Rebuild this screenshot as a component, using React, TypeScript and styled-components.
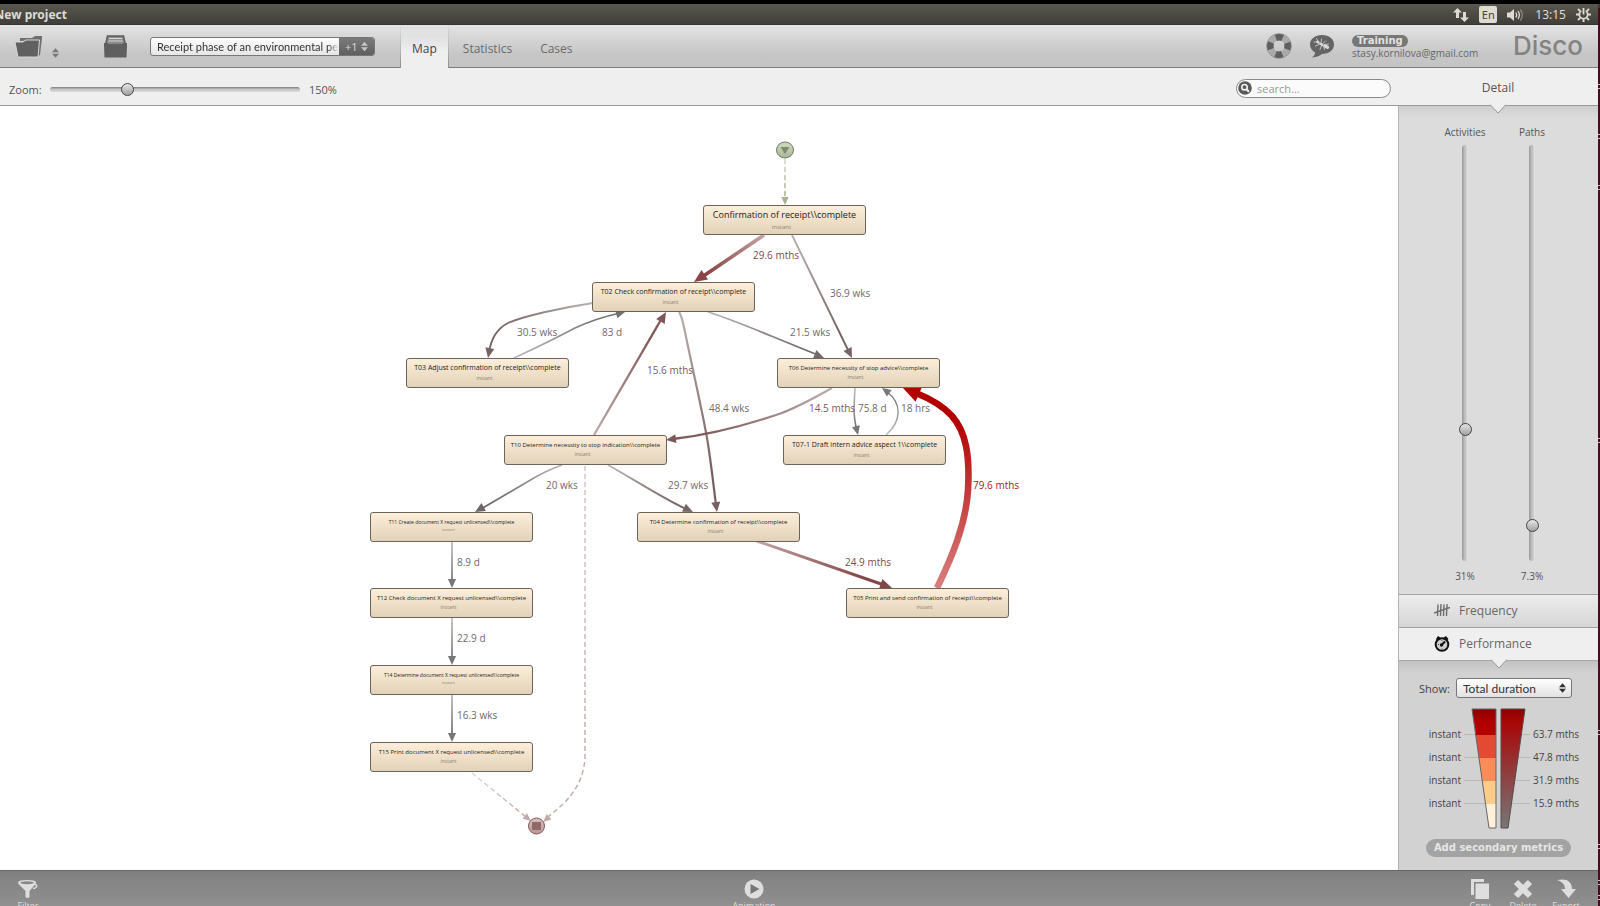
import React from "react";
import styled, { createGlobalStyle, css } from "styled-components";

const UI_FONT = '"Open Sans", "Noto Sans", sans-serif';

const GlobalStyle = createGlobalStyle`
  *, *::before, *::after { box-sizing: border-box; }
  html, body { margin: 0; height: 100%; }
  body { font-family: ${UI_FONT}; font-size: 11px; color: #444; background: #000; }
  button, input, select { font-family: inherit; color: inherit; margin: 0; }
  svg { display: block; }
`;

/* ---------- window ---------- */

const Desktop = styled.div`
  height: 100vh;
  overflow: hidden;
  display: flex;
  padding-top: 4px;
  background: #000;
`;

const AppWindow = styled.div`
  flex: 1;
  min-width: 0;
  display: flex;
  flex-direction: column;
`;

const DesktopEdge = styled.div`
  position: relative;
  flex: none;
  width: 2px;
  background: #4a0a22;
  border-top: 4px solid #3c3b37;
`;

const EdgeMark = styled.span<{ $top: number }>`
  position: absolute;
  left: 0;
  top: ${(p) => p.$top}px;
  width: 2px;
  height: 5px;
  border: solid #c9bcc2;
  border-width: 1px 0;
`;

const TitleBar = styled.header`
  flex: none;
  height: 21px;
  display: flex;
  align-items: center;
  justify-content: space-between;
  background: linear-gradient(#59574f, #3f3e39);
  border-bottom: 1px solid #35342f;
  color: #dfdbd2;
`;

const WindowTitle = styled.h1`
  margin: 0;
  padding-top: 1px;
  width: 67px;
  display: flex;
  justify-content: flex-end;
  overflow: hidden;
  white-space: nowrap;
  font: 700 12px/20px "Noto Sans", sans-serif;
`;

const Tray = styled.div`
  display: flex;
  align-items: center;
  gap: 10px;
  padding: 1px 7px 0 0;
`;

const KeyboardLayout = styled.span`
  width: 18px;
  height: 17px;
  border-radius: 2px;
  background: #dfdbd2;
  color: #45433d;
  font: 400 11px/17px "Noto Sans", sans-serif;
  text-align: center;
`;

const Clock = styled.time`
  font: 400 12px/20px "Noto Sans", sans-serif;
`;

/* ---------- toolbar ---------- */

const Toolbar = styled.div`
  flex: none;
  height: 43px;
  display: flex;
  background: linear-gradient(#e3e3e3, #c6c6c6 70%, #c4c4c4);
  border-bottom: 1px solid #7d7d7d;
`;

const FileTools = styled.div`
  flex: none;
  width: 150px;
  display: flex;
  align-items: center;
  justify-content: space-between;
  padding: 1px 23px 0 15px;
`;

const HelpTools = styled.div`
  flex: none;
  width: 86px;
  display: flex;
  align-items: center;
  gap: 18px;
`;

const IconButton = styled.button`
  flex: none;
  padding: 0;
  border: 0;
  background: none;
  display: flex;
  align-items: flex-end;
  gap: 9px;
`;

const Picker = styled.div`
  flex: none;
  align-self: center;
  width: 225px;
  height: 19px;
  margin-top: 1px;
  display: flex;
  border: 1px solid #777;
  border-radius: 3px;
  overflow: hidden;
  background: linear-gradient(#fdfdfd, #e6e6e6);
`;

const PickerSelect = styled.select`
  appearance: none;
  flex: 1;
  min-width: 0;
  padding: 0 0 0 6px;
  border: 0;
  background: none;
  font-size: 11px;
  font-family: Lato, sans-serif;
  line-height: 17px;
  color: #333;
  mask-image: linear-gradient(90deg, #000 94%, transparent);
`;

const PickerMore = styled.button`
  flex: none;
  width: 35px;
  padding: 0 0 0 6px;
  border: 0;
  display: flex;
  align-items: center;
  gap: 3px;
  background: linear-gradient(#7b7b7b, #5f5f5f);
  color: #dadada;
  font-size: 11px;
  line-height: 17px;
`;

const Tabs = styled.nav`
  flex: 1;
  display: flex;
  margin-left: 25px;
`;

const Tab = styled.a<{ $active?: boolean }>`
  padding: 0 14px;
  font-size: 12px;
  line-height: 48px;
  height: 42px;
  text-decoration: none;
  color: #6b6b6b;
  ${(p) =>
    p.$active &&
    css`
      height: 43px;
      padding: 0 11px;
      color: #444;
      border: solid transparent;
      border-width: 0 1px;
      border-image: linear-gradient(rgba(140, 140, 140, 0), #8a8a8a) 1;
      background: linear-gradient(rgba(239, 239, 239, 0), #efefef 60%);
    `}
`;

const Account = styled.div`
  width: 161px;
  display: flex;
  flex-direction: column;
  align-items: flex-start;
  padding-top: 10px;
`;

const Badge = styled.span`
  height: 12px;
  padding: 0 5px;
  border-radius: 6px;
  background: #777;
  color: #e2e2e2;
  font: 700 10px/12px "DejaVu Sans", sans-serif;
`;

const Email = styled.span`
  font-size: 10px;
  line-height: 12px;
  color: #666;
`;

const Brand = styled.div`
  width: 85px;
  font: 500 26px/42px Inter, sans-serif;
  color: #838383;
`;

/* ---------- sub bar ---------- */

const SubBar = styled.div`
  flex: none;
  height: 38px;
  display: flex;
  align-items: center;
  padding-top: 3px;
  background: #efefef;
  border-bottom: 1px solid #999;
`;

const ZoomControl = styled.div`
  flex: 1;
  display: flex;
  align-items: center;
  padding: 2px 0 0 9px;
`;

const ZoomLabel = styled.label`
  width: 41px;
  color: #555;
`;

const thumb = css`
  appearance: none;
  width: 13px;
  height: 13px;
  border: 1px solid #444;
  border-radius: 50%;
  background: linear-gradient(#e6e6e6, #a0a0a0);
`;

const HorizontalRange = styled.input`
  appearance: none;
  width: 250px;
  height: 13px;
  background: none;
  &::-webkit-slider-runnable-track {
    height: 5px;
    border-radius: 3px;
    background: linear-gradient(#7c7c7c, #c4c4c4 45%, #dcdcdc);
  }
  &::-webkit-slider-thumb {
    ${thumb}
    margin-top: -4px;
  }
`;

const VerticalRange = styled.input`
  appearance: none;
  writing-mode: vertical-lr;
  direction: rtl;
  flex: 1;
  min-height: 0;
  width: 13px;
  background: none;
  &::-webkit-slider-runnable-track {
    width: 6px;
    border-radius: 3px;
    background: linear-gradient(90deg, #979797, #bcbcbc 40%, #c6c6c6 65%, #e8e8e8);
  }
  &::-webkit-slider-thumb {
    ${thumb}
    margin-left: -3px;
  }
`;

const ZoomValue = styled.output`
  margin-left: 9px;
  color: #555;
`;

const SearchBox = styled.label`
  width: 155px;
  height: 19px;
  margin-right: 7px;
  display: flex;
  align-items: center;
  gap: 5px;
  padding: 0 1px;
  border: 1px solid #8a8a8a;
  border-radius: 10px;
  background: #fbfbfb;
`;

const SearchInput = styled.input`
  min-width: 0;
  flex: 1;
  padding: 0;
  border: 0;
  outline: 0;
  background: none;
  font-size: 11px;
  line-height: 15px;
  &::placeholder { color: #999; opacity: 1; }
`;

const DetailHeading = styled.h2`
  position: relative;
  margin: 0;
  width: 200px;
  font-size: 12px;
  font-weight: 400;
  line-height: 34px;
  text-align: center;
  color: #555;
`;

const NotchBox = styled.span`
  position: absolute;
  left: 50%;
  top: 100%;
  margin-left: -8px;
  margin-top: -1px;
  z-index: 1;
`;

/* ---------- main area ---------- */

const Body = styled.main`
  flex: 1;
  min-height: 0;
  display: flex;
`;

const Canvas = styled.section`
  flex: 1;
  min-width: 0;
  display: flex;
  justify-content: center;
  padding: 34px 20px 0 0;
  background: #fff;
`;

const Graph = styled.div`
  position: relative;
  flex: none;
  width: 640px;
  height: 700px;
`;

const EdgeLayer = styled.svg`
  position: absolute;
  inset: 0;
  overflow: visible;
`;

const ActivityBox = styled.div<{ $x: number; $y: number }>`
  position: absolute;
  left: ${(p) => p.$x}px;
  top: ${(p) => p.$y}px;
  width: 163px;
  height: 30px;
  border: 1px solid #6a645c;
  border-radius: 3px;
  background: linear-gradient(#fdeeda, #e2d2b8);
  text-align: center;
  white-space: nowrap;
`;

const ActivityName = styled.div<{ $size: number }>`
  height: ${(p) => p.$size + 8}px;
  font-size: ${(p) => p.$size}px;
  line-height: ${(p) => (p.$size < 7 ? 19 : 17)}px;
  color: #222;
`;

const ActivityMetric = styled.div<{ $size: number }>`
  font-size: ${(p) => p.$size}px;
  line-height: 8px;
  padding-right: 6px;
  color: #8b8272;
`;

const EdgeLabel = styled.span<{ $x: number; $y: number; $color: string }>`
  position: absolute;
  left: ${(p) => p.$x}px;
  top: ${(p) => p.$y - 7}px;
  font-size: 10px;
  line-height: 14px;
  white-space: nowrap;
  color: ${(p) => p.$color};
`;

/* ---------- sidebar ---------- */

const Sidebar = styled.aside`
  flex: none;
  width: 200px;
  display: flex;
  flex-direction: column;
  border-left: 1px solid #b4b4b4;
  background: #d2d2d2;
`;

const SliderPanel = styled.div`
  flex: 1;
  min-height: 0;
  display: flex;
  justify-content: center;
  padding: 19px 0 10px;
  background: linear-gradient(#cdcdcd, #dcdcdc 12px);
`;

const SliderColumn = styled.div`
  width: 67px;
  display: flex;
  flex-direction: column;
  align-items: center;
  line-height: 15px;
  color: #555;
`;

const SliderLabel = styled.label`
  font-size: 10px;
  margin-bottom: 5px;
`;

const SliderValue = styled.output`
  font-size: 10px;
  margin-top: 8px;
`;

const ModeButton = styled.button<{ $active?: boolean }>`
  position: relative;
  flex: none;
  height: 33px;
  padding: 0 0 2px 35px;
  display: flex;
  align-items: center;
  gap: 9px;
  border: 0;
  border-top: 1px solid #a2a2a2;
  background: ${(p) => (p.$active ? "#efefef" : "linear-gradient(#ececec, #d6d6d6)")};
  font-size: 12px;
  color: #666;
  text-align: left;
`;

const MetricPanel = styled.div`
  flex: none;
  display: flex;
  flex-direction: column;
  height: 210px;
  padding-top: 17px;
  border-top: 1px solid #a8a8a8;
  background: linear-gradient(#c2c2c2, #d2d2d2 12px);
`;

const ShowRow = styled.div`
  display: flex;
  align-items: center;
  padding-left: 20px;
  margin-bottom: 10px;
`;

const ShowLabel = styled.label`
  width: 37px;
  font-size: 11px;
  color: #444;
`;

const SelectShell = styled.span`
  position: relative;
  display: block;
`;

const MetricSelect = styled.select`
  appearance: none;
  width: 116px;
  height: 20px;
  padding: 0 6px;
  border: 1px solid #777;
  border-radius: 3px;
  background: linear-gradient(#fff, #e2e2e2);
  font-family: Lato, sans-serif;
  font-size: 12px;
  color: #333;
`;

const SelectArrows = styled.span`
  position: absolute;
  right: 6px;
  top: 5px;
  pointer-events: none;
`;

const Legend = styled.div`
  display: grid;
  grid-template-columns: 1fr 66px 1fr;
  gap: 3px;
  padding-right: 3px;
`;

const LegendLabels = styled.ul<{ $align: "left" | "right" }>`
  margin: 0;
  padding: 15px 0 0;
  list-style: none;
  text-align: ${(p) => p.$align};
  font-size: 10px;
  line-height: 23px;
  color: #444;
  white-space: nowrap;
`;

const AddMetricButton = styled.button`
  align-self: center;
  width: 145px;
  height: 18px;
  margin: 10px 0 0;
  padding: 0;
  border: 0;
  border-radius: 9px;
  background: #a3a3a3;
  color: #e6e6e6;
  font: 700 10px/18px "DejaVu Sans", sans-serif;
`;

/* ---------- bottom bar ---------- */

const BottomBar = styled.footer`
  flex: none;
  height: 36px;
  overflow: hidden;
  display: flex;
  justify-content: space-between;
  padding: 0 11px 0 7px;
  border-top: 1px solid #666;
  background: linear-gradient(#808080, #909090);
`;

const BottomGroup = styled.div`
  display: flex;
  gap: 1px;
`;

const BottomButton = styled.button`
  width: 42px;
  height: 42px;
  flex: none;
  display: flex;
  flex-direction: column;
  align-items: center;
  gap: 1px;
  padding: 8px 0 0;
  border: 0;
  background: none;
  color: #dedede;
  font-size: 9px;
  line-height: 11px;
`;

/* ---------- icons ---------- */

const UpDown = ({ color, w = 8, h = 11 }: { color: string; w?: number; h?: number }) => (
  <svg width={w} height={h} viewBox="0 0 8 11" fill={color}>
    <path d="M4 0 8 4.600H0zM4 11 8 6.400H0z" />
  </svg>
);

const FolderIcon = () => (
  <svg width="28" height="22" viewBox="0 0 28 22">
    <path d="M5 5V2h12l3-2h7v2l-2 17-2 1V4z" fill="#6f6f6f" />
    <path d="M0 6h8l3-2h13.500l-1.500 17H3z" fill="#606060" stroke="#d6d6d6" strokeWidth="1" />
  </svg>
);

const CabinetIcon = () => (
  <svg width="23" height="23" viewBox="0 0 23 23">
    <path d="M3.500 1h16l2 9h-20z" fill="#8b8b8b" stroke="#5c5c5c" strokeWidth="1.500" />
    <path d="M5 3.500h13M4.500 6h14" stroke="#dadada" strokeWidth="1" />
    <path d="M0 8h4l1 1.500h13L19 8h4v3l-.5 11.500h-22L0 11z" fill="#5f5f5f" />
  </svg>
);

const LifebuoyIcon = () => (
  <svg width="26" height="26" viewBox="0 0 26 26" fill="none">
    <circle cx="13" cy="13" r="12.300" stroke="#8a8a8a" />
    <circle cx="13" cy="13" r="8.700" stroke="#a9a9a9" strokeWidth="6" />
    <circle cx="13" cy="13" r="8.700" stroke="#5f5f5f" strokeWidth="6.500" strokeDasharray="6.830 6.830" strokeDashoffset="3.400" />
  </svg>
);

const AntBubbleIcon = () => (
  <svg width="24" height="24" viewBox="0 0 24 24">
    <path d="M12 1c7 0 12 4 12 9.500S19 20 12 20c-2 2-5 3-10 3.500 2-1.500 3-3 3-5C2 16.500 0 14 0 10.500 0 5 5 1 12 1z" fill="#646464" />
    <g stroke="#d8d8d8" strokeWidth="0.800" fill="none" strokeLinecap="round">
      <path d="M8 7 6.500 4.500M7 8 4 8M11 9.500l.5-4.500M12.500 10l3-3M10 10l-4.500 2M11.500 11.500l-1.500 4M13.500 12l1 3.500M14.500 10.500l4-.500" />
      <path d="M7.500 7.800 8.500 8.500" strokeWidth="2.600" />
      <path d="M10.500 9.800 12.500 11" strokeWidth="2.200" />
      <path d="M15 12 17.500 13.200" strokeWidth="3.400" />
    </g>
  </svg>
);

const SearchIcon = () => (
  <svg width="14" height="14" viewBox="0 0 14 14" fill="none">
    <circle cx="7" cy="7" r="6.800" fill="#5a5a5a" />
    <circle cx="6.500" cy="6.200" r="2.700" stroke="#f2f2f2" strokeWidth="1.600" />
    <path d="m8.500 8.200 2.500 2.600" stroke="#f2f2f2" strokeWidth="2" />
  </svg>
);

const NetworkIcon = () => (
  <svg width="16" height="14" viewBox="0 0 16 14" fill="#dfdbd2">
    <path d="M4.500 0 9 4.500H6V10H3V4.500H0zM11.500 14 7 9.500h3V4h3v5.500h3z" />
  </svg>
);

const VolumeIcon = () => (
  <svg width="18" height="14" viewBox="0 0 18 14" fill="none" stroke="#dfdbd2" strokeWidth="1.300">
    <path d="M0 4.500h3L7 1v12L3 9.500H0z" fill="#dfdbd2" stroke="none" />
    <path d="M8.800 4.500q1.700 2.500 0 5M11 3q2.800 4 0 8" />
    <path d="M13.300 1.500q4 5.500 0 11" stroke="#8c8981" />
  </svg>
);

const SessionIcon = () => (
  <svg width="15" height="15" viewBox="0 0 15 15" fill="none" stroke="#dfdbd2">
    <path d="M5.300 3.900A4.200 4.200 0 1 0 9.700 3.900" strokeWidth="1.700" />
    <path d="M7.500 1V7.500" strokeWidth="1.800" />
    <path d="M7.500 12v3M0 7.500h3M12 7.500h3M2 2l2.200 2.200M13 2l-2.200 2.200M2 13l2.200-2.200M13 13l-2.200-2.200" strokeWidth="1.900" />
  </svg>
);

const TallyIcon = () => (
  <svg width="16" height="14" viewBox="0 0 16 14" fill="none" stroke="#6c6c6c" strokeWidth="1.400">
    <path d="M4 1.500 3.500 13M7 1 6.500 13M10 1.500 9.500 13M13 1l-.5 12M0 10 16 4.500" />
  </svg>
);

const StopwatchIcon = () => (
  <svg width="16" height="17" viewBox="0 0 16 17">
    <path d="M2 4 4 1l3 2h2l3-2 2.500 3-2 2h-9z" fill="#111" />
    <circle cx="8" cy="9.500" r="6.300" fill="#cfcfcf" stroke="#111" strokeWidth="2" />
    <path d="m7 10.500 4-4" stroke="#111" strokeWidth="2" />
    <circle cx="7.500" cy="10" r="1.700" fill="#111" />
    <path d="M4 9.500h1M8 5v1M8 13.500v1" stroke="#555" />
  </svg>
);

const FilterIcon = () => (
  <svg width="20" height="20" viewBox="0 0 20 20">
    <path d="M0 3q1-2 9-2t9 2l-.5 2L11.500 12v6q-2 2-4 0v-6L.5 5z" fill="#dedede" />
    <ellipse cx="9" cy="3.800" rx="6.800" ry="1.500" fill="#868686" />
    <path d="M17 5.500c3 0 2 4-2 4" stroke="#dedede" strokeWidth="1.500" fill="none" />
  </svg>
);

const PlayIcon = () => (
  <svg width="20" height="20" viewBox="0 0 20 20">
    <circle cx="10" cy="10" r="9.500" fill="#dedede" />
    <path d="M6.500 5v10l9-5z" fill="#777" />
  </svg>
);

const CopyIcon = () => (
  <svg width="18" height="20" viewBox="0 0 18 20" fill="#dedede">
    <path d="M0 0h13v3H3v13H0z" />
    <path d="M4.500 4.500H18V20H4.500z" />
  </svg>
);

const DeleteIcon = () => (
  <svg width="20" height="20" viewBox="0 0 20 20" stroke="#dedede" strokeWidth="6">
    <path d="m3 3 14 14M17 3 3 17" />
  </svg>
);

const ExportIcon = () => (
  <svg width="20" height="20" viewBox="0 0 20 20" fill="#dedede">
    <path d="M1 1c9-2 15 1 15 9h4l-7.500 9L5 10h4c0-4-2-7-8-9z" />
  </svg>
);

const Notch = () => (
  <NotchBox>
    <svg width="16" height="10" viewBox="0 0 16 10">
      <path d="M0 0h16v.5L8 9 0 .5z" fill="#efefef" />
      <path d="M0 .5 8 9l8-8.500" fill="none" stroke="#999" />
    </svg>
  </NotchBox>
);

/* ---------- process map ---------- */

// Map coordinates are kept as laid out; ORIGIN is the top-left of the graph.
const ORIGIN = { x: 369, y: 140 };

type Activity = { name: string; x: number; y: number; size: number; metric: number };

const activities: Activity[] = [
  { name: "Confirmation of receipt\\\\complete", x: 703, y: 205, size: 9, metric: 6 },
  { name: "T02 Check confirmation of receipt\\\\complete", x: 592, y: 282, size: 7, metric: 5 },
  { name: "T03 Adjust confirmation of receipt\\\\complete", x: 406, y: 358, size: 7, metric: 5 },
  { name: "T06 Determine necessity of stop advice\\\\complete", x: 777, y: 358, size: 6, metric: 5 },
  { name: "T10 Determine necessity to stop indication\\\\complete", x: 504, y: 435, size: 6, metric: 5 },
  { name: "T07-1 Draft intern advice aspect 1\\\\complete", x: 783, y: 435, size: 7, metric: 5 },
  { name: "T11 Create document X request unlicensed\\\\complete", x: 370, y: 512, size: 5, metric: 4 },
  { name: "T04 Determine confirmation of receipt\\\\complete", x: 637, y: 512, size: 6, metric: 5 },
  { name: "T12 Check document X request unlicensed\\\\complete", x: 370, y: 588, size: 6, metric: 5 },
  { name: "T05 Print and send confirmation of receipt\\\\complete", x: 846, y: 588, size: 6, metric: 5 },
  { name: "T14 Determine document X request unlicensed\\\\complete", x: 370, y: 665, size: 5, metric: 4 },
  { name: "T15 Print document X request unlicensed\\\\complete", x: 370, y: 742, size: 6, metric: 5 },
];

type Point = [number, number];
type EdgeData = {
  d: string;
  from: Point;
  via: Point;
  to: Point;
  color: string;
  width: number;
  head?: number;
  dashed?: boolean;
};

const edges: EdgeData[] = [
  { d: "M785 159V198", from: [785, 159], via: [785, 190], to: [785, 205], color: "#a5b392", width: 1.6, head: 8, dashed: true },
  { d: "M764 235 702 277", from: [764, 235], via: [764, 235], to: [694, 282], color: "#8a4646", width: 3.6, head: 13 },
  { d: "M792 235 849 352", from: [792, 235], via: [792, 235], to: [852, 358], color: "#776464", width: 1.9, head: 10 },
  { d: "M593 303C560 308 524 316 508 323 496 329 491 340 489 352", from: [593, 303], via: [491, 342], to: [488, 358], color: "#756464", width: 1.9, head: 10 },
  { d: "M514 358C540 346 560 336 575 328 588 322 602 317 620 313", from: [514, 358], via: [602, 318], to: [625, 312], color: "#757070", width: 1.6, head: 9 },
  { d: "M594 435 662 318", from: [594, 435], via: [594, 435], to: [666, 312], color: "#805858", width: 2.4, head: 11 },
  { d: "M679 312C682 316 683 322 685 332 694 376 704 418 708 444 712 470 714 490 716 505", from: [679, 312], via: [713, 480], to: [717, 512], color: "#785f5f", width: 2.2, head: 10 },
  { d: "M708 312C740 322 765 334 818 355", from: [708, 312], via: [780, 340], to: [824, 358], color: "#736a6a", width: 1.7, head: 10 },
  { d: "M832 388C812 399 795 409 776 415 740 427 708 435 673 439", from: [832, 388], via: [708, 434], to: [666, 440], color: "#7c5a5a", width: 2.3, head: 10 },
  { d: "M855 388C854 404 853 418 857 430", from: [855, 388], via: [854, 418], to: [858, 435], color: "#777", width: 1.6, head: 9 },
  { d: "M886 435C902 421 902 403 887 392", from: [886, 435], via: [893, 396], to: [882, 388], color: "#777", width: 1.4, head: 9 },
  { d: "M562 465C542 472 534 478 522 485L481 509", from: [562, 465], via: [522, 485], to: [475, 512], color: "#6f6666", width: 1.7, head: 10 },
  { d: "M608 465C630 477 662 498 686 509", from: [608, 465], via: [665, 499], to: [693, 512], color: "#766666", width: 1.9, head: 10 },
  { d: "M757 541 884 585", from: [757, 541], via: [757, 541], to: [892, 588], color: "#834646", width: 3, head: 12 },
  { d: "M937 588C952 557 966 524 968 490 970 455 966 432 952 416 943 406 931 399 916 393", from: [937, 588], via: [940, 404], to: [903, 388], color: "#b20000", width: 6.6, head: 17 },
  { d: "M452 541V582", from: [452, 541], via: [452, 541], to: [452, 588], color: "#777", width: 1.7, head: 9 },
  { d: "M452 618V659", from: [452, 618], via: [452, 618], to: [452, 665], color: "#777", width: 1.7, head: 9 },
  { d: "M452 694V736", from: [452, 694], via: [452, 694], to: [452, 742], color: "#777", width: 1.8, head: 9 },
  { d: "M585 466V755C585 775 576 792 562 805L548 817", from: [585, 300], via: [562, 806], to: [543, 822], color: "#c0aba8", width: 1.4, head: 8, dashed: true },
  { d: "M472 773 526 817", from: [472, 773], via: [472, 773], to: [531, 821], color: "#c0aba8", width: 1.3, head: 8, dashed: true },
];

const GREY = "#6f6a6a";

const labels: { text: string; x: number; y: number; color?: string }[] = [
  { text: "29.6 mths", x: 753, y: 255, color: "#874848" },
  { text: "36.9 wks", x: 830, y: 293 },
  { text: "30.5 wks", x: 517, y: 332 },
  { text: "83 d", x: 602, y: 332 },
  { text: "21.5 wks", x: 790, y: 332 },
  { text: "15.6 mths", x: 647, y: 370, color: "#7c5a5a" },
  { text: "48.4 wks", x: 709, y: 408 },
  { text: "14.5 mths", x: 809, y: 408, color: "#7c5a5a" },
  { text: "75.8 d", x: 858, y: 408 },
  { text: "18 hrs", x: 901, y: 408 },
  { text: "20 wks", x: 546, y: 485 },
  { text: "29.7 wks", x: 668, y: 485 },
  { text: "79.6 mths", x: 973, y: 485, color: "#b0151a" },
  { text: "8.9 d", x: 457, y: 562 },
  { text: "24.9 mths", x: 845, y: 562, color: "#7f4a4a" },
  { text: "22.9 d", x: 457, y: 638 },
  { text: "16.3 wks", x: 457, y: 715 },
];

function Edge({ edge, id }: { edge: EdgeData; id: string }) {
  const { from, via, to, color, width, head = 8, dashed } = edge;
  const angle = (Math.atan2(to[1] - via[1], to[0] - via[0]) * 180) / Math.PI;
  return (
    <g>
      <linearGradient id={id} gradientUnits="userSpaceOnUse" x1={from[0]} y1={from[1]} x2={to[0]} y2={to[1]}>
        <stop offset="0" stopColor={color} stopOpacity={0.5} />
        <stop offset="0.8" stopColor={color} />
      </linearGradient>
      <path d={edge.d} fill="none" stroke={`url(#${id})`} strokeWidth={width} strokeDasharray={dashed ? "5 3" : undefined} />
      <path
        d={`M0 0L${-head} ${-head * 0.45}V${head * 0.45}Z`}
        fill={color}
        transform={`translate(${to[0]} ${to[1]}) rotate(${angle})`}
      />
    </g>
  );
}

function ProcessMap() {
  return (
    <Graph>
      <EdgeLayer width="640" height="700" viewBox={`${ORIGIN.x} ${ORIGIN.y} 640 700`} aria-hidden="true">
        <defs>
          <linearGradient id="startFill" x2="0" y2="1">
            <stop offset="0" stopColor="#d3dcc3" />
            <stop offset="1" stopColor="#a9b694" />
          </linearGradient>
          <linearGradient id="endFill" x2="0" y2="1">
            <stop offset="0" stopColor="#dcc0bd" />
            <stop offset="1" stopColor="#bb9794" />
          </linearGradient>
        </defs>
        {edges.map((edge, i) => (
          <Edge key={i} edge={edge} id={`edge${i}`} />
        ))}
        <ellipse cx="785" cy="150" rx="8.500" ry="8" fill="url(#startFill)" stroke="#737b68" />
        <path d="M780.500 147h9l-4.500 7z" fill="#808a70" />
        <ellipse cx="536.500" cy="826" rx="8" ry="8" fill="url(#endFill)" stroke="#7d5b5b" />
        <path d="M532 822h9v8h-9z" fill="#8f6a6a" />
      </EdgeLayer>
      {activities.map((a) => (
        <ActivityBox key={a.name} $x={a.x - ORIGIN.x} $y={a.y - ORIGIN.y}>
          <ActivityName $size={a.size}>{a.name}</ActivityName>
          <ActivityMetric $size={a.metric}>instant</ActivityMetric>
        </ActivityBox>
      ))}
      {labels.map((l) => (
        <EdgeLabel key={l.text} $x={l.x - ORIGIN.x} $y={l.y - ORIGIN.y} $color={l.color ?? GREY}>
          {l.text}
        </EdgeLabel>
      ))}
    </Graph>
  );
}

function LegendChart() {
  const bands = ["#b10000", "#e24a33", "#fc8d59", "#fdcc8a", "#fef0d9"];
  const cuts = [1, 27, 50, 73, 96, 120];
  return (
    <svg width="66" height="121" viewBox="0 0 66 121">
      <defs>
        <clipPath id="leftWedge">
          <path d="M8 1h24v119h-7z" />
        </clipPath>
        <linearGradient id="rightWedge" x2="0" y2="1">
          <stop offset="0" stopColor="#8c0000" />
          <stop offset="0.1" stopColor="#a80606" />
          <stop offset="1" stopColor="#777" />
        </linearGradient>
        <linearGradient id="shade" x2="0" y2="1">
          <stop offset="0" stopOpacity="0.25" />
          <stop offset="0.12" stopOpacity="0" />
        </linearGradient>
      </defs>
      <path d="M0 26.500h14M0 49.500h17M0 72.500h20M0 95.500h23M57 26.500h9M54 49.500h12M51 72.500h15M47 95.500h19" stroke="#b8b8b8" />
      <g clipPath="url(#leftWedge)">
        {bands.map((c, i) => (
          <rect key={c} x="0" y={cuts[i]} width="40" height={cuts[i + 1] - cuts[i]} fill={c} />
        ))}
        <rect width="40" height="121" fill="url(#shade)" />
      </g>
      <path d="M8 1h24v119h-7z" fill="none" stroke="#666" />
      <path d="M37 1h24l-17 119h-7z" fill="url(#rightWedge)" stroke="#5a4a4a" />
    </svg>
  );
}

const edgeMarks = [76, 126, 177, 430, 722, 836, 872, 887];

export default function App() {
  return (
    <>
      <GlobalStyle />
      <Desktop>
        <AppWindow>
          <TitleBar>
            <WindowTitle>New project</WindowTitle>
            <Tray>
              <NetworkIcon />
              <KeyboardLayout>En</KeyboardLayout>
              <VolumeIcon />
              <Clock>13:15</Clock>
              <SessionIcon />
            </Tray>
          </TitleBar>

          <Toolbar>
            <FileTools>
              <IconButton aria-label="Project menu">
                <FolderIcon />
                <UpDown color="#777" w={7} h={10} />
              </IconButton>
              <IconButton aria-label="Import data">
                <CabinetIcon />
              </IconButton>
            </FileTools>
            <Picker>
              <PickerSelect aria-label="Data set">
                <option>Receipt phase of an environmental permit</option>
              </PickerSelect>
              <PickerMore>
                +1
                <UpDown color="#c4c4c4" w={7} h={11} />
              </PickerMore>
            </Picker>
            <Tabs>
              <Tab href="#map" $active>Map</Tab>
              <Tab href="#statistics">Statistics</Tab>
              <Tab href="#cases">Cases</Tab>
            </Tabs>
            <HelpTools>
              <IconButton aria-label="Help">
                <LifebuoyIcon />
              </IconButton>
              <IconButton aria-label="Feedback">
                <AntBubbleIcon />
              </IconButton>
            </HelpTools>
            <Account>
              <Badge>Training</Badge>
              <Email>stasy.kornilova@gmail.com</Email>
            </Account>
            <Brand>Disco</Brand>
          </Toolbar>

          <SubBar>
            <ZoomControl>
              <ZoomLabel htmlFor="zoom">Zoom:</ZoomLabel>
              <HorizontalRange id="zoom" type="range" min={0} max={100} defaultValue={30} />
              <ZoomValue htmlFor="zoom">150%</ZoomValue>
            </ZoomControl>
            <SearchBox>
              <SearchIcon />
              <SearchInput type="text" placeholder="search..." aria-label="Search" />
            </SearchBox>
            <DetailHeading>
              Detail
              <Notch />
            </DetailHeading>
          </SubBar>

          <Body>
            <Canvas>
              <ProcessMap />
            </Canvas>
            <Sidebar>
              <SliderPanel>
                <SliderColumn>
                  <SliderLabel htmlFor="activities">Activities</SliderLabel>
                  <VerticalRange id="activities" type="range" min={0} max={100} defaultValue={31} />
                  <SliderValue htmlFor="activities">31%</SliderValue>
                </SliderColumn>
                <SliderColumn>
                  <SliderLabel htmlFor="paths">Paths</SliderLabel>
                  <VerticalRange id="paths" type="range" min={0} max={100} step={0.1} defaultValue={7.3} />
                  <SliderValue htmlFor="paths">7.3%</SliderValue>
                </SliderColumn>
              </SliderPanel>
              <ModeButton>
                <TallyIcon />
                Frequency
              </ModeButton>
              <ModeButton $active>
                <StopwatchIcon />
                Performance
                <Notch />
              </ModeButton>
              <MetricPanel>
                <ShowRow>
                  <ShowLabel htmlFor="metric">Show:</ShowLabel>
                  <SelectShell>
                    <MetricSelect id="metric">
                      <option>Total duration</option>
                    </MetricSelect>
                    <SelectArrows>
                      <UpDown color="#333" w={7} h={10} />
                    </SelectArrows>
                  </SelectShell>
                </ShowRow>
                <Legend>
                  <LegendLabels $align="right">
                    {[1, 2, 3, 4].map((n) => (
                      <li key={n}>instant</li>
                    ))}
                  </LegendLabels>
                  <LegendChart />
                  <LegendLabels $align="left">
                    {["63.7", "47.8", "31.9", "15.9"].map((n) => (
                      <li key={n}>{n} mths</li>
                    ))}
                  </LegendLabels>
                </Legend>
                <AddMetricButton>Add secondary metrics</AddMetricButton>
              </MetricPanel>
            </Sidebar>
          </Body>

          <BottomBar>
            <BottomGroup>
              <BottomButton><FilterIcon />Filter</BottomButton>
            </BottomGroup>
            <BottomGroup>
              <BottomButton><PlayIcon />Animation</BottomButton>
            </BottomGroup>
            <BottomGroup>
              <BottomButton><CopyIcon />Copy</BottomButton>
              <BottomButton><DeleteIcon />Delete</BottomButton>
              <BottomButton><ExportIcon />Export</BottomButton>
            </BottomGroup>
          </BottomBar>
        </AppWindow>
        <DesktopEdge>
          {edgeMarks.map((top) => (
            <EdgeMark key={top} $top={top} />
          ))}
        </DesktopEdge>
      </Desktop>
    </>
  );
}
